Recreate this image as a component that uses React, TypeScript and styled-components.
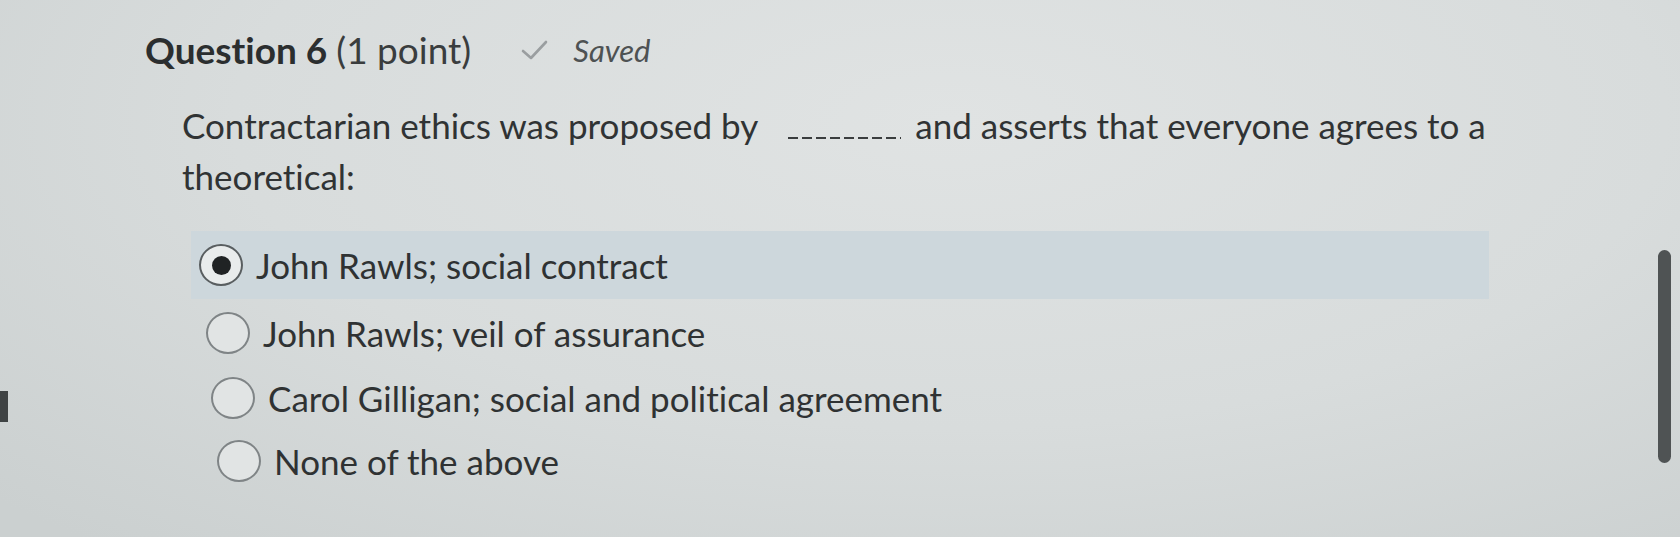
import React from "react";
import styled, { createGlobalStyle } from "styled-components";

const Global = createGlobalStyle`
  html, body { margin: 0; padding: 0; }
  body {
    width: 1680px;
    height: 537px;
    overflow: hidden;
    font-family: Lato, "Open Sans", sans-serif;
    font-variant-ligatures: none;
    color: #2f3233;
    background: radial-gradient(ellipse 1300px 560px at 950px 120px, #e0e3e3 0%, #d8dcdc 55%, #cbd0d0 100%);
  }
`;

const Page = styled.div`
  position: relative;
  width: 1680px;
  height: 537px;
  box-sizing: border-box;
  padding: 28px 0 0 145px;
`;

const Header = styled.div`
  display: flex;
  align-items: center;
  gap: 50px;
  height: 44px;
`;

const Title = styled.h2`
  margin: 0;
  font-size: 37px;
  line-height: 44px;
  font-weight: 700;
  color: #2b2e2f;
  span { font-weight: 400; color: #3a3d3e; }
`;

const Status = styled.div`
  display: flex;
  align-items: center;
  gap: 24px;
  font-size: 31px;
  font-style: italic;
  color: #4e5253;
`;

const Question = styled.p`
  margin: 28px 0 0 37px;
  width: 1330px;
  font-size: 35px;
  line-height: 51px;
  color: #303334;
`;

const Blank = styled.span`
  display: inline-block;
  width: 113px;
  height: 2px;
  margin: 0 14px 0 30px;
  vertical-align: baseline;
  background: repeating-linear-gradient(
    to right,
    #3a3d3e 0px,
    #3a3d3e 10px,
    transparent 10px,
    transparent 14px
  );
`;

const Options = styled.div`
  display: flex;
  flex-direction: column;
  margin: 29px 0 0 46px;
  width: 1298px;
`;

const Row = styled.label<{ $selected?: boolean; $indent: number; $h: number }>`
  display: flex;
  align-items: center;
  gap: 13px;
  height: ${(p) => p.$h}px;
  padding-left: ${(p) => 8 + p.$indent}px;
  font-size: 35px;
  color: #2f3233;
  background: ${(p) => (p.$selected ? "#cdd7dc" : "transparent")};
`;

const Radio = styled.span<{ $checked?: boolean }>`
  position: relative;
  box-sizing: border-box;
  width: 44px;
  height: 42px;
  border-radius: 50%;
  border: 2px solid ${(p) => (p.$checked ? "#595e60" : "#7f8486")};
  background: ${(p) => (p.$checked ? "#e9ecec" : "#e1e4e4")};
  flex-shrink: 0;
  &::after {
    content: "";
    display: ${(p) => (p.$checked ? "block" : "none")};
    position: absolute;
    left: 50%;
    top: 50%;
    width: 19px;
    height: 19px;
    margin: -9.5px 0 0 -9.5px;
    border-radius: 50%;
    background: #202324;
  }
`;

const Scrollbar = styled.div`
  position: absolute;
  right: 9px;
  top: 250px;
  width: 13px;
  height: 213px;
  border-radius: 7px;
  background: #4f5354;
`;

const EdgeMark = styled.div`
  position: absolute;
  left: 0;
  top: 391px;
  width: 8px;
  height: 31px;
  background: #3f4344;
`;

const options = [
  { text: "John Rawls; social contract", selected: true, indent: 0, h: 68 },
  { text: "John Rawls; veil of assurance", selected: false, indent: 7, h: 67 },
  { text: "Carol Gilligan; social and political agreement", selected: false, indent: 12, h: 64 },
  { text: "None of the above", selected: false, indent: 18, h: 62 },
];

export default function App() {
  return (
    <>
      <Global />
      <Page>
        <Header>
          <Title>
            Question 6 <span>(1 point)</span>
          </Title>
          <Status>
            <svg width="28" height="22" viewBox="0 0 28 22" fill="none">
              <path d="M2 12 L10 19 L25 3" stroke="#9a9ea0" strokeWidth="2.6" strokeLinecap="round" strokeLinejoin="round" />
            </svg>
            Saved
          </Status>
        </Header>
        <Question>
          Contractarian ethics was proposed by<Blank />and asserts that everyone agrees to a theoretical:
        </Question>
        <Options>
          {options.map((o) => (
            <Row key={o.text} $selected={o.selected} $indent={o.indent} $h={o.h}>
              <Radio $checked={o.selected} />
              {o.text}
            </Row>
          ))}
        </Options>
        <Scrollbar />
        <EdgeMark />
      </Page>
    </>
  );
}
